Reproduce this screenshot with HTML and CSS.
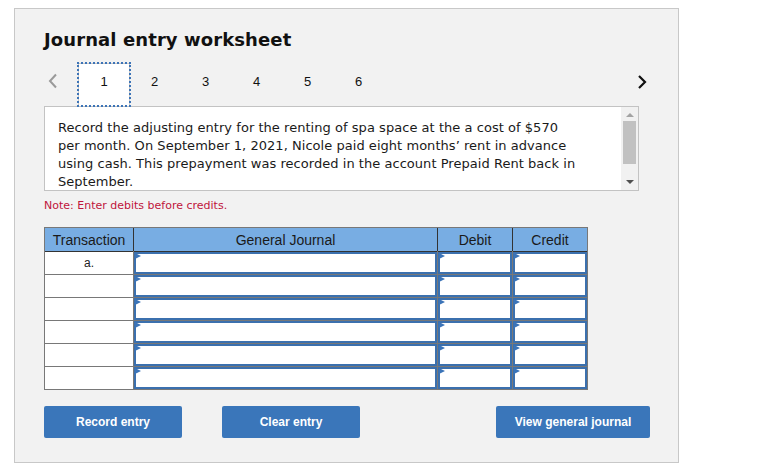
FILE: index.html
```html
<!DOCTYPE html>
<html>
<head>
<meta charset="utf-8">
<link rel="stylesheet" href="styles.css">
</head>
<body>
<div class="panel">
  <h1 class="title">Journal entry worksheet</h1>
  <div class="tabs">
    <span class="arrow prev">
      <svg width="10" height="16" viewBox="0 0 10 16"><path d="M8 1.5 L2 8 L8 14.5" fill="none" stroke="#9a9a9a" stroke-width="2"/></svg>
    </span>
    <div class="tablist">
      <span class="tab active">1</span>
      <span class="tab">2</span>
      <span class="tab">3</span>
      <span class="tab">4</span>
      <span class="tab">5</span>
      <span class="tab">6</span>
    </div>
    <span class="arrow next">
      <svg width="10" height="16" viewBox="0 0 10 16"><path d="M2 2 L8 8 L2 14" fill="none" stroke="#111" stroke-width="2.2"/></svg>
    </span>
  </div>
  <div class="qbox">
    <div class="qtext">Record the adjusting entry for the renting of spa space at the a cost of $570 per month. On September 1, 2021, Nicole paid eight months’ rent in advance using cash. This prepayment was recorded in the account Prepaid Rent back in September.</div>
    <div class="sbar">
      <span class="sb-up"></span>
      <span class="sb-thumb"></span>
      <span class="sb-down"></span>
    </div>
  </div>
  <p class="note">Note: Enter debits before credits.</p>
  <div class="jt">
    <div class="hd">Transaction</div>
    <div class="hd">General Journal</div>
    <div class="hd">Debit</div>
    <div class="hd">Credit</div>

    <div class="tc">a.</div><div class="in"><i></i></div><div class="in"><i></i></div><div class="in"><i></i></div>
    <div class="tc"></div><div class="in"><i></i></div><div class="in"><i></i></div><div class="in"><i></i></div>
    <div class="tc"></div><div class="in"><i></i></div><div class="in"><i></i></div><div class="in"><i></i></div>
    <div class="tc"></div><div class="in"><i></i></div><div class="in"><i></i></div><div class="in"><i></i></div>
    <div class="tc"></div><div class="in"><i></i></div><div class="in"><i></i></div><div class="in"><i></i></div>
    <div class="tc"></div><div class="in"><i></i></div><div class="in"><i></i></div><div class="in"><i></i></div>
  </div>
  <div class="btns">
    <button class="btn w138">Record entry</button>
    <button class="btn w138">Clear entry</button>
    <button class="btn w154 right">View general journal</button>
  </div>
</div>
</body>
</html>
```
FILE: styles.css
```css
* { box-sizing: border-box; }
body { margin: 0; background: #fff; font-family: "DejaVu Sans", Verdana, sans-serif; }
.panel {
  margin: 8px 0 0 14px;
  width: 665px;
  height: 455px;
  background: #f2f2f2;
  border: 1px solid #c8c8c8;
  padding: 0 28px 0 29px;
}
.title {
  margin: 20px 0 0 0;
  font-size: 18px;
  line-height: 22px;
  font-weight: bold;
  color: #111;
  letter-spacing: 0.1px;
}
.tabs {
  margin-top: 12px;
  height: 43px;
  display: flex;
  align-items: flex-start;
  width: 603px;
}
.arrow { height: 36px; display: flex; align-items: center; }
.prev { width: 34px; padding-left: 4px; }
.tablist { display: flex; }
.tab {
  width: 51px;
  height: 36px;
  display: flex;
  align-items: center;
  justify-content: center;
  font-family: "Liberation Sans", Arial, sans-serif;
  font-size: 13px;
  color: #111;
}
.tab.active {
  height: 43px;
  width: 52px;
  background: #fff;
  border: 1px solid #c8c8c8;
  border-bottom: none;
  outline: 2px dotted #3d74b7;
  outline-offset: -1px;
  align-items: flex-start;
  padding-top: 10px;
  margin-right: -1px;
}
.next { margin-left: auto; padding-top: 1px; }
.qbox {
  width: 595px;
  height: 85px;
  background: #fff;
  border: 1px solid #c3c3c3;
  display: flex;
  overflow: hidden;
}
.qtext {
  flex: 1;
  padding: 12px 40px 0 13px;
  font-size: 13px;
  letter-spacing: 0.04px;
  line-height: 18px;
  color: #1a1a1a;
}
.sbar {
  width: 17px;
  background: #f1f1f1;
  display: flex;
  flex-direction: column;
  align-items: center;
}
.sb-up, .sb-down { width: 0; height: 0; border-left: 4px solid transparent; border-right: 4px solid transparent; }
.sb-up { margin-top: 6px; border-bottom: 4px solid #a3a3a3; }
.sb-thumb { margin-top: 4px; width: 13px; height: 43px; background: #c1c1c1; }
.sb-down { margin-top: auto; margin-bottom: 6px; border-top: 4px solid #505050; }
.note {
  margin: 8px 0 0 0;
  font-size: 11px;
  line-height: 14px;
  color: #c0143c;
}
.jt {
  margin-top: 14px;
  width: 544px;
  display: grid;
  grid-template-columns: 88px 303px 74px 74px;
  grid-template-rows: 23px repeat(6, 22px);
  gap: 1px;
  background: #787878;
  border: 1px solid #787878;
  font-family: "Liberation Sans", Arial, sans-serif;
  font-size: 14px;
}
.hd {
  background: #78ade3;
  color: #1a1a1a;
  display: flex;
  align-items: center;
  justify-content: center;
  box-shadow: 1px 0 0 #333, 0 1px 0 #333;
}
.hd:nth-child(4) { box-shadow: 0 1px 0 #333; }
.tc {
  background: #fff;
  display: flex;
  align-items: center;
  justify-content: center;
  font-size: 12px;
  color: #222;
}
.in {
  position: relative;
  background: #fff;
  border: 2px solid #3b70ae;
}
.in i {
  position: absolute;
  top: -1px;
  left: -1px;
  width: 0;
  height: 0;
  border-left: 6px solid #3b74b8;
  border-top: 3px solid transparent;
  border-bottom: 3px solid transparent;
}
.btns {
  margin-top: 16px;
  display: flex;
  gap: 40px;
}
.btn {
  height: 32px;
  background: #3a76ba;
  color: #fff;
  border: none;
  border-radius: 2px;
  font-family: "Liberation Sans", Arial, sans-serif;
  font-weight: bold;
  font-size: 12px;
  padding: 0;
}
.w138 { width: 138px; }
.w154 { width: 154px; }
.right { margin-left: auto; }
```
